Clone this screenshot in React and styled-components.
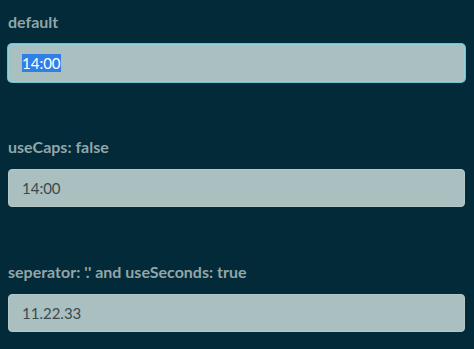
import { useEffect, useRef } from 'react';
import styled, { createGlobalStyle } from 'styled-components';

const GlobalStyle = createGlobalStyle`
  html, body {
    margin: 0;
    padding: 0;
    background: #032a39;
  }
`;

const Page = styled.div`
  min-height: 349px;
  box-sizing: border-box;
  padding: 13px 9px 0 8px;
  background: #032a39;
  font-family: Lato, 'Noto Sans', sans-serif;
`;

const Field = styled.div`
  display: flex;
  flex-direction: column;
  margin-bottom: 56px;
`;

const Label = styled.label`
  font-size: 16px;
  line-height: 18px;
  font-weight: 700;
  color: #91a6a8;
  margin-bottom: 13px;
`;

const TimeInput = styled.input`
  box-sizing: border-box;
  height: 38px;
  width: 100%;
  padding: 0 13px;
  border: 1px solid #b4c8c8;
  border-radius: 4px;
  background: #aabfbf;
  color: #3b4a4f;
  font-family: Lato, 'Noto Sans', sans-serif;
  font-size: 15px;
  outline: none;

  &:focus {
    box-shadow: 0 0 0 1px #6fc3cc;
    border-color: #8fd2d9;
  }

  &::selection {
    background: #2f7fe6;
    color: #ffffff;
  }
`;

const fields = [
  { label: 'default', value: '14:00', focus: true },
  { label: 'useCaps: false', value: '14:00' },
  { label: "seperator: '.' and useSeconds: true", value: '11.22.33' },
];

export default function App() {
  const first = useRef(null);

  useEffect(() => {
    if (first.current) {
      first.current.focus();
      first.current.select();
    }
  }, []);

  return (
    <>
      <GlobalStyle />
      <Page>
        {fields.map((f, i) => (
          <Field key={i}>
            <Label>{f.label}</Label>
            <TimeInput
              ref={f.focus ? first : undefined}
              defaultValue={f.value}
              spellCheck={false}
            />
          </Field>
        ))}
      </Page>
    </>
  );
}
